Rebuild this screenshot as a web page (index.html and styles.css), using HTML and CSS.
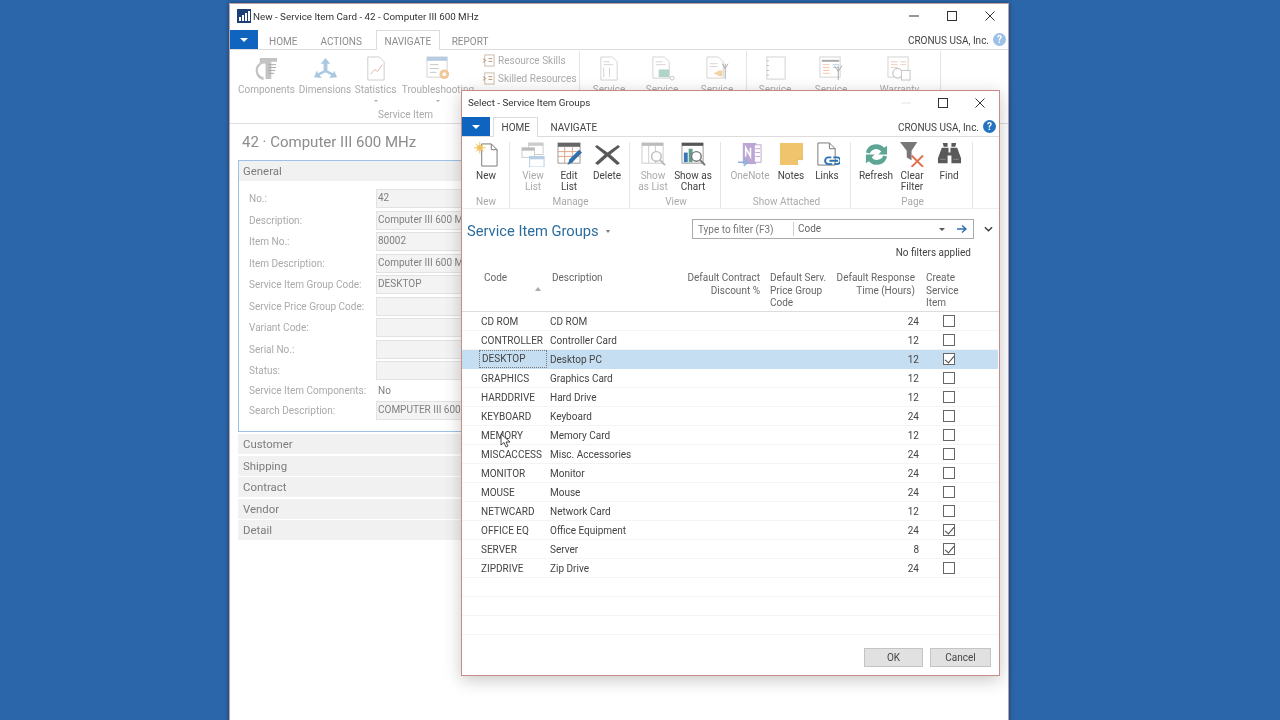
FILE: index.html
```html
<!DOCTYPE html>
<html lang="en">
<head>
<meta charset="utf-8">
<title>Select - Service Item Groups</title>
<link rel="stylesheet" href="styles.css">
</head>
<body>
<div class="desktop">

<section class="window card-window">
  <header class="titlebar">
    <svg class="app-icon" viewBox="0 0 14 14"><rect width="14" height="14" fill="#1d3f73"/><path d="M2 12V8h2v4zM5 12V6h2v6zM8 12V4h2v8zM11 12V2h2v10z" fill="#fff"/></svg>
    <span class="title-text">New - Service Item Card - 42 - Computer III 600 MHz</span>
    <div class="controls controls-outer">
      <svg viewBox="0 0 10 10"><path d="M0 5h10" stroke="#333" fill="none"/></svg>
      <svg viewBox="0 0 10 10"><rect x=".5" y=".5" width="9" height="9" stroke="#333" fill="none"/></svg>
      <svg viewBox="0 0 10 10"><path d="M.5.5l9 9M9.500.5l-9 9" stroke="#333" fill="none"/></svg>
    </div>
  </header>
  <nav class="tabbar tabbar-outer">
    <span class="file-btn"><i class="caret-white"></i></span>
    <span class="tab">HOME</span>
    <span class="tab">ACTIONS</span>
    <span class="tab tab-on">NAVIGATE</span>
    <span class="tab">REPORT</span>
    <span class="company">CRONUS USA, Inc.</span>
    <span class="help help-pale">?</span>
  </nav>
  <div class="ribbon ribbon-outer">
    <div class="rgroup rg-service-item">
      <div class="ritems">
        <div class="ritem w57"><svg class="ricon" viewBox="0 0 26 26"><path d="M6 2h18v4H18v18h-6V8a7 7 0 0 0-2 14v3A10 10 0 0 1 6 7z" fill="#b9b9b9"/><path d="M15 9h8M15 12h8M15 15h7M15 18h6" stroke="#999" fill="none"/></svg><span>Components</span></div>
        <div class="ritem w60"><svg class="ricon" viewBox="0 0 26 26"><path d="M13 2l5 6h-3v7l6 3 1-3 3 7-8 1 2-3-6-3-6 3 2 3-8-1 3-7 1 3 6-3V8H8z" fill="#9dbfdc"/></svg><span>Dimensions</span></div>
        <div class="ritem w41"><svg class="ricon" viewBox="0 0 26 26"><path d="M5 1h12l5 5v19H5z" fill="#fff" stroke="#c4c4c4"/><path d="M8 19l4-5 3 2 5-7" stroke="#e2a79a" fill="none"/></svg><span>Statistics</span><i class="more"></i></div>
        <div class="ritem w84"><svg class="ricon" viewBox="0 0 26 26"><rect x="1" y="1" width="21" height="21" fill="#fff" stroke="#ccc"/><rect x="1" y="1" width="21" height="4" fill="#a9c4e0"/><path d="M4 9h9M4 13h9M4 17h7" stroke="#bbb" fill="none"/><circle cx="19" cy="19" r="5" fill="#f0bd85"/><circle cx="19" cy="19" r="2" fill="#fff"/></svg><span>Troubleshooting</span><i class="more"></i></div>
        <div class="rsmall">
          <div class="rsmall-row"><svg viewBox="0 0 14 14"><rect x="3" y="1" width="10" height="12" fill="#fff" stroke="#c9b7a5"/><path d="M1 5l3 2-3 2M7 5h4M7 8h4" stroke="#b08f70" fill="none"/></svg><span>Resource Skills</span></div>
          <div class="rsmall-row"><svg viewBox="0 0 14 14"><rect x="3" y="1" width="10" height="12" fill="#fff" stroke="#c9b7a5"/><path d="M1 5l3 2-3 2M7 5h4M7 8h4" stroke="#b08f70" fill="none"/></svg><span>Skilled Resources</span></div>
        </div>
      </div>
      <div class="rlabel">Service Item</div>
    </div>
    <div class="rgroup rg-outer-b">
      <div class="ritems">
        <div class="ritem w56"><svg class="ricon" viewBox="0 0 26 26"><path d="M4 1h12l5 5v19H4z" fill="#fff" stroke="#ccc"/><path d="M7 6h6M7 9h10M7 12v10M13 12v10" stroke="#ccc" fill="none"/></svg><span>Service</span></div>
        <div class="ritem w50"><svg class="ricon" viewBox="0 0 26 26"><path d="M3 1h12l5 5v17H3z" fill="#fff" stroke="#ccc"/><path d="M6 6h7M6 9h10" stroke="#ccc" fill="none"/><rect x="9" y="14" width="11" height="8" fill="#a5cdbd"/><circle cx="23" cy="23" r="2" fill="none" stroke="#bbb"/></svg><span>Service</span></div>
        <div class="ritem w60"><svg class="ricon" viewBox="0 0 26 26"><path d="M2 1h12l5 5v17H2z" fill="#fff" stroke="#ccc"/><path d="M5 8h8M5 11h8" stroke="#ccc" fill="none"/><path d="M9 18l6-3h3v6h-3z" fill="#f0cb98"/><path d="M21 8v16M24 8l-3 5-3-5" stroke="#999" fill="none"/></svg><span>Service</span></div>
      </div>
    </div>
    <div class="rgroup rg-outer-c">
      <div class="ritems">
        <div class="ritem w56"><svg class="ricon" viewBox="0 0 26 26"><rect x="4" y="1" width="19" height="23" fill="#fff" stroke="#ccc"/><path d="M4 5h2M4 10h2M4 15h2M4 20h2" stroke="#aaa" fill="none"/></svg><span>Service</span></div>
        <div class="ritem w56"><svg class="ricon" viewBox="0 0 26 26"><rect x="1" y="1" width="21" height="21" fill="#fff" stroke="#ccc"/><path d="M3 5h18" stroke="#999" stroke-width="2" fill="none"/><path d="M4 9h7M4 12h7M4 15h7M4 18h7" stroke="#eebe9e" fill="none"/><path d="M14 9h7M14 12h7" stroke="#b8cbe0" fill="none"/><path d="M20 10v15M24 10l-4 6-4-6" stroke="#999" fill="none"/></svg><span>Service</span></div>
        <div class="ritem w81"><svg class="ricon" viewBox="0 0 26 26"><rect x="1" y="1" width="21" height="21" fill="#fff" stroke="#ccc"/><path d="M4 6h7M4 9h7M4 12h7M14 6h6M14 9h6" stroke="#e8c5b4" fill="none"/><circle cx="11" cy="18" r="5" fill="#fff" stroke="#aaa"/><rect x="15" y="15" width="9" height="10" fill="#fff" stroke="#bbb"/></svg><span>Warranty</span></div>
      </div>
    </div>
  </div>

  <div class="card-body">
    <h1 class="card-title">42 · Computer III 600 MHz</h1>
    <section class="fast-open">
      <div class="fast-head">General</div>
      <div class="fields">
        <div class="field"><label>No.:</label><div class="val">42</div></div>
        <div class="field"><label>Description:</label><div class="val">Computer III 600 MHz</div></div>
        <div class="field"><label>Item No.:</label><div class="val">80002</div></div>
        <div class="field"><label>Item Description:</label><div class="val">Computer III 600 MHz</div></div>
        <div class="field"><label>Service Item Group Code:</label><div class="val">DESKTOP</div></div>
        <div class="field"><label>Service Price Group Code:</label><div class="val"></div></div>
        <div class="field"><label>Variant Code:</label><div class="val"></div></div>
        <div class="field"><label>Serial No.:</label><div class="val"></div></div>
        <div class="field"><label>Status:</label><div class="val"></div></div>
        <div class="field field-plain"><label>Service Item Components:</label><div class="plain">No</div></div>
        <div class="field"><label>Search Description:</label><div class="val">COMPUTER III 600 MHZ</div></div>
      </div>
    </section>
    <div class="fast-closed">Customer</div>
    <div class="fast-closed">Shipping</div>
    <div class="fast-closed">Contract</div>
    <div class="fast-closed">Vendor</div>
    <div class="fast-closed">Detail</div>
  </div>
</section>

<section class="window dialog">
  <header class="dlg-title">
    <span class="dlg-title-text">Select - Service Item Groups</span>
    <div class="controls controls-dlg">
      <svg viewBox="0 0 10 10"><path d="M0 5h10" stroke="#e4e4e4" fill="none"/></svg>
      <svg viewBox="0 0 10 10"><rect x=".5" y=".5" width="9" height="9" stroke="#333" fill="none"/></svg>
      <svg viewBox="0 0 10 10"><path d="M.5.5l9 9M9.500.5l-9 9" stroke="#333" fill="none"/></svg>
    </div>
  </header>
  <nav class="tabbar tabbar-dlg">
    <span class="file-btn"><i class="caret-white"></i></span>
    <span class="tab tab-on">HOME</span>
    <span class="tab">NAVIGATE</span>
    <span class="company">CRONUS USA, Inc.</span>
    <span class="help">?</span>
  </nav>
  <div class="ribbon ribbon-dlg">
    <div class="rgroup rg-new">
      <div class="ritems">
        <div class="ritem w46"><svg class="ricon" viewBox="0 0 26 26"><path d="M8 2h10l6 6v17H8z" fill="#fff" stroke="#777"/><path d="M18 2v6h6" fill="none" stroke="#777"/><circle cx="6" cy="6" r="3" fill="#f4c35f"/><path d="M6 0v12M0 6h12M2 2l8 8M10 2l-8 8" stroke="#f4c35f"/></svg><span>New</span></div>
      </div>
      <div class="rlabel">New</div>
    </div>
    <div class="rgroup rg-manage">
      <div class="ritems">
        <div class="ritem w36 off"><svg class="ricon" viewBox="0 0 26 26"><rect x="8" y="1" width="15" height="12" fill="#fff" stroke="#ccc"/><rect x="8" y="1" width="15" height="3" fill="#ccc"/><rect x="1" y="6" width="13" height="10" fill="#fff" stroke="#ccc"/><rect x="1" y="6" width="13" height="3" fill="#bbb"/><rect x="9" y="15" width="15" height="11" fill="#fff" stroke="#b5cde5"/><rect x="9" y="15" width="15" height="3" fill="#b5cde5"/></svg><span>View<br>List</span></div>
        <div class="ritem w36"><svg class="ricon" viewBox="0 0 26 26"><rect x="1" y="1" width="23" height="21" fill="#fff" stroke="#999"/><rect x="1" y="1" width="23" height="4" fill="#666"/><path d="M1 10h23M1 15h23M8 5v17M16 5v17" stroke="#e0a083" fill="none"/><path d="M11 24l2-6 10-10 3 3-10 10z" fill="#2f6fae"/></svg><span>Edit<br>List</span></div>
        <div class="ritem w40"><svg class="ricon" viewBox="0 0 26 26"><path d="M2 3l11 8 11-8 2 2-10 8 10 9-3 2-10-9-10 9-3-2 10-9L0 5z" fill="#595959"/></svg><span>Delete</span></div>
      </div>
      <div class="rlabel">Manage</div>
    </div>
    <div class="rgroup rg-view">
      <div class="ritems">
        <div class="ritem w30 off"><svg class="ricon" viewBox="0 0 26 26"><rect x="1" y="1" width="22" height="21" fill="#fff" stroke="#ccc"/><rect x="1" y="1" width="22" height="3" fill="#bbb"/><path d="M8 4v18M15 4v18" stroke="#ccc" fill="none"/><circle cx="16" cy="15" r="5" fill="#fff" stroke="#bbb" stroke-width="1.5"/><path d="M20 19l5 5" stroke="#bbb" stroke-width="2"/></svg><span>Show<br>as List</span></div>
        <div class="ritem w50"><svg class="ricon" viewBox="0 0 26 26"><rect x="1" y="1" width="22" height="21" fill="#fff" stroke="#999"/><rect x="1" y="1" width="22" height="3" fill="#555"/><rect x="3" y="11" width="4" height="10" fill="#3c78b0"/><rect x="8" y="7" width="4" height="14" fill="#5d9e8e"/><circle cx="16" cy="15" r="5" fill="#fff" stroke="#777" stroke-width="1.5"/><path d="M20 19l5 5" stroke="#777" stroke-width="2"/></svg><span>Show as<br>Chart</span></div>
      </div>
      <div class="rlabel">View</div>
    </div>
    <div class="rgroup rg-attached">
      <div class="ritems">
        <div class="ritem w40 off"><svg class="ricon" viewBox="0 0 26 26"><rect x="5" y="1" width="14" height="22" fill="#bda6d3"/><rect x="17" y="3" width="7" height="18" fill="#fff" stroke="#bda6d3"/><path d="M18 7h5M18 11h5M18 15h5" stroke="#bda6d3"/><path d="M8 15V6l5 9V6" stroke="#fff" stroke-width="1.6" fill="none"/><path d="M0 21h9M6 17l4 4-4 4" stroke="#8db4d9" stroke-width="1.6" fill="none"/></svg><span>OneNote</span></div>
        <div class="ritem w42"><svg class="ricon" viewBox="0 0 26 26"><path d="M1 1h24v17l-6 6H1z" fill="#f0c36d"/><path d="M19 24v-6h6" fill="#fff" stroke="#e2b35f"/></svg><span>Notes</span></div>
        <div class="ritem w30"><svg class="ricon" viewBox="0 0 26 26"><path d="M3 1h12l6 6v17H3z" fill="#fff" stroke="#777"/><path d="M15 1v6h6" fill="none" stroke="#777"/><path d="M17 16h-3a3 3 0 0 0 0 7h4M19 16h4a3 3 0 0 1 0 7h-3M15 19.500h9" stroke="#2c71b3" stroke-width="2" fill="none"/></svg><span>Links</span></div>
      </div>
      <div class="rlabel">Show Attached</div>
    </div>
    <div class="rgroup rg-page">
      <div class="ritems">
        <div class="ritem w40"><svg class="ricon" viewBox="0 0 26 26"><path d="M2 11a11 11 0 0 1 19-5l3-2v9h-9l3-3a7 7 0 0 0-12 2z" fill="#5fa595"/><path d="M24 15a11 11 0 0 1-19 5l-3 2v-9h9l-3 3a7 7 0 0 0 12-2z" fill="#5fa595"/></svg><span>Refresh</span></div>
        <div class="ritem w32"><svg class="ricon" viewBox="0 0 26 26"><path d="M0 0h18l-6 9v10l-5-3V9z" fill="#777"/><path d="M12 14l12 12M24 14L12 26" stroke="#e0704f" stroke-width="2"/></svg><span>Clear<br>Filter</span></div>
        <div class="ritem w42"><svg class="ricon" viewBox="0 0 26 26"><path d="M6 1h5v4H7zM15 1h5l-1 4h-4zM5 6h7v5h2V6h7l4 11v5H15v-8h-4v8H1v-5z" fill="#595959"/><path d="M3 18h6M17 18h6" stroke="#8a8a8a" fill="none"/></svg><span>Find</span></div>
      </div>
      <div class="rlabel">Page</div>
    </div>
  </div>

  <div class="list-top">
    <div class="list-heading"><h2>Service Item Groups</h2><i class="caret-gray"></i></div>
    <div class="filter-col">
      <div class="filter-row">
        <div class="filter">
          <span class="filter-hint">Type to filter (F3)</span>
          <span class="filter-field">Code</span>
          <i class="caret-dark"></i>
          <svg class="filter-go" viewBox="0 0 10 10"><path d="M0 5h8M5 1.500L9 5 5 8.500" stroke="#2f6fae" stroke-width="1.500" fill="none"/></svg>
        </div>
        <svg class="chevron" viewBox="0 0 10 6"><path d="M1 1l4 4 4-4" stroke="#333" stroke-width="1.400" fill="none"/></svg>
      </div>
      <div class="no-filters">No filters applied</div>
    </div>
  </div>

  <div class="grid">
    <div class="ghead">
      <div class="gh gh-code">Code<i class="sort-up"></i></div>
      <div class="gh gh-desc">Description</div>
      <div class="gh gh-right gh-contract">Default Contract Discount %</div>
      <div class="gh gh-serv">Default Serv. Price Group Code</div>
      <div class="gh gh-right gh-resp">Default Response Time (Hours)</div>
      <div class="gh gh-create">Create Service Item</div>
    </div>
    <div class="grow"><span class="c-code">CD ROM</span><span class="c-desc">CD ROM</span><span class="c-num">24</span><span class="c-chk"><i class="chk"></i></span></div>
    <div class="grow"><span class="c-code">CONTROLLER</span><span class="c-desc">Controller Card</span><span class="c-num">12</span><span class="c-chk"><i class="chk"></i></span></div>
    <div class="grow grow-sel"><span class="c-code"><b class="focus">DESKTOP</b></span><span class="c-desc">Desktop PC</span><span class="c-num">12</span><span class="c-chk"><i class="chk chk-on"></i></span></div>
    <div class="grow"><span class="c-code">GRAPHICS</span><span class="c-desc">Graphics Card</span><span class="c-num">12</span><span class="c-chk"><i class="chk"></i></span></div>
    <div class="grow"><span class="c-code">HARDDRIVE</span><span class="c-desc">Hard Drive</span><span class="c-num">12</span><span class="c-chk"><i class="chk"></i></span></div>
    <div class="grow"><span class="c-code">KEYBOARD</span><span class="c-desc">Keyboard</span><span class="c-num">24</span><span class="c-chk"><i class="chk"></i></span></div>
    <div class="grow"><span class="c-code">MEMORY</span><span class="c-desc">Memory Card</span><span class="c-num">12</span><span class="c-chk"><i class="chk"></i></span></div>
    <div class="grow"><span class="c-code">MISCACCESS</span><span class="c-desc">Misc. Accessories</span><span class="c-num">24</span><span class="c-chk"><i class="chk"></i></span></div>
    <div class="grow"><span class="c-code">MONITOR</span><span class="c-desc">Monitor</span><span class="c-num">24</span><span class="c-chk"><i class="chk"></i></span></div>
    <div class="grow"><span class="c-code">MOUSE</span><span class="c-desc">Mouse</span><span class="c-num">24</span><span class="c-chk"><i class="chk"></i></span></div>
    <div class="grow"><span class="c-code">NETWCARD</span><span class="c-desc">Network Card</span><span class="c-num">12</span><span class="c-chk"><i class="chk"></i></span></div>
    <div class="grow"><span class="c-code">OFFICE EQ</span><span class="c-desc">Office Equipment</span><span class="c-num">24</span><span class="c-chk"><i class="chk chk-on"></i></span></div>
    <div class="grow"><span class="c-code">SERVER</span><span class="c-desc">Server</span><span class="c-num">8</span><span class="c-chk"><i class="chk chk-on"></i></span></div>
    <div class="grow"><span class="c-code">ZIPDRIVE</span><span class="c-desc">Zip Drive</span><span class="c-num">24</span><span class="c-chk"><i class="chk"></i></span></div>
    <div class="grow"></div>
    <div class="grow"></div>
    <div class="grow"></div>
  </div>

  <footer class="dlg-foot">
    <button class="btn btn-ok">OK</button>
    <button class="btn btn-cancel">Cancel</button>
  </footer>
</section>

<svg class="cursor" viewBox="0 0 11 16"><path d="M1 1v11l3-2.500L6 14l2-1-2-4h4z" fill="#fff" stroke="#222" stroke-width=".8"/></svg>
</div>
</body>
</html>
```
FILE: styles.css
```css
* { box-sizing: border-box; }
html, body { margin: 0; height: 100%; }
body { overflow: hidden; background: #2a66a9; font-family: Roboto, "Open Sans", "Liberation Sans", sans-serif; font-size: 10px; color: #444; }
.desktop { position: relative; width: 1280px; height: 720px; overflow: hidden; filter: blur(.3px); }
i { display: block; font-style: normal; }

.window { position: absolute; background: #fff; display: flex; flex-direction: column; }
.card-window { left: 229px; top: 3px; width: 780px; height: 730px; border: 1px solid #c2a3a3; border-bottom: 0; box-shadow: 0 0 4px rgba(20, 40, 80, .7); }
.dialog { left: 461px; top: 90px; width: 539px; height: 586px; border: 1px solid #c78c85; box-shadow: 0 4px 16px rgba(0, 0, 0, .22); }

.titlebar { height: 26px; flex: none; display: flex; align-items: center; padding: 0 0 2px 7px; }
.app-icon { width: 14px; height: 14px; }
.title-text { margin-left: 2px; font-size: 9.800px; color: #333; }
.controls { margin-left: auto; display: flex; align-items: center; }
.controls svg { width: 10px; height: 10px; }
.controls-outer { gap: 28px; margin-right: 13px; }
.controls-dlg { gap: 27px; margin-right: 14px; }

.tabbar { flex: none; display: flex; align-items: flex-end; border-bottom: 1px solid #dcdcdc; }
.tabbar-outer { height: 20px; gap: 1px; }
.tabbar-dlg { height: 20px; gap: 2px; }
.file-btn { width: 28px; height: 19px; background: #0f64c0; display: flex; align-items: center; justify-content: center; flex: none; margin-right: 1px; }
.tabbar-outer .file-btn { margin-right: -1px; }
.caret-white { width: 0; height: 0; border: 4px solid transparent; border-top: 4px solid #fff; border-bottom: 0; }
.tab { height: 20px; margin-bottom: -1px; padding: 0 9px; line-height: 21px; color: #8c8c8c; border: 1px solid transparent; border-bottom: 0; }
.tabbar-outer .tab { padding: 0 10px; }
.tabbar-outer .tab-on { padding: 0 7.500px; margin-left: 2px; }
.tab-on { background: #fff; border-color: #dcdcdc; }
.tabbar-dlg .tab { color: #444; line-height: 20px; }
.tabbar-dlg .tab-on { padding: 0 7.500px; }
.company { margin-left: auto; align-self: center; padding-top: 2px; color: #444; }
.help { width: 13px; height: 13px; margin: 0 3px 0 2px; align-self: center; border-radius: 50%; background: #2472c2; color: #fff; font-weight: 700; font-size: 10px; line-height: 13px; text-align: center; }
.help-pale { background: #9dc0e6; margin-left: 3px; margin-right: 2px; }

.ribbon { flex: none; display: flex; }
.ribbon-outer { height: 74px; border-bottom: 1px solid #ddd; padding-left: 8px; color: #aaa; }
.ribbon-outer .ricon { opacity: .85; }
.ribbon-dlg { height: 72px; border-bottom: 1px solid #eee; color: #444; padding-top: 5px; }
.rgroup { display: flex; flex-direction: column; border-right: 1px solid #e4e4e4; }
.ritems { display: flex; flex: 1; }
.ritem { display: flex; flex-direction: column; align-items: center; text-align: center; line-height: 11px; flex: none; white-space: nowrap; }
.ritem span { margin-top: 3px; }
.ricon { width: 25px; height: 25px; flex: none; }
.off { color: #aaa; }
.w30 { width: 30px; } .w32 { width: 32px; } .w36 { width: 36px; } .w40 { width: 40px; } .w41 { width: 41px; }
.w42 { width: 42px; } .w46 { width: 46px; } .w50 { width: 50px; } .w56 { width: 56px; }
.w57 { width: 57px; } .w60 { width: 60px; } .w81 { width: 81px; } .w84 { width: 84px; }
.more { width: 0; height: 0; margin-top: 5px; border: 2px solid transparent; border-top: 2px solid #aaa; border-bottom: 0; }
.rlabel { flex: none; text-align: center; color: #aaa; line-height: 12px; }
.ribbon-outer .ritem { padding-top: 5px; }
.ribbon-outer .rgroup { height: 70px; margin-top: 1px; }
.rg-service-item { width: 342px; }
.rg-outer-b { width: 167px; padding-left: 1px; }
.rg-outer-c { width: 194px; }
.rsmall { width: 98px; padding-top: 3px; padding-left: 2px; display: flex; flex-direction: column; gap: 5px; white-space: nowrap; }
.rsmall-row { display: flex; align-items: center; gap: 3px; height: 13px; }
.rsmall-row svg { width: 13px; height: 13px; }
.ribbon-outer .rlabel { padding: 0 6px 0 0; }
.ribbon-dlg .rlabel { padding-left: 2px; }
.ribbon-dlg .rg-new .rlabel { padding-left: 0; }
.rg-new { width: 48px; padding-left: 1px; }
.rg-manage { width: 120px; }
.rg-manage .ritems { padding-left: 5px; }
.rg-view { width: 91px; }
.rg-view .ritems { padding-left: 8px; }
.rg-attached { width: 130px; }
.rg-attached .ritems { padding-left: 9px; }
.rg-page { width: 122px; }
.rg-page .ritems { padding-left: 5px; }

.card-body { flex: 1; padding: 7px 10px 0 8px; color: #aaa; }
.card-title { margin: 0 0 7px 4px; font-weight: 400; font-size: 15px; line-height: 22px; color: #8c8c8c; }
.fast-open { border: 1px solid #9cc2e6; padding-bottom: 11px; }
.fast-head { height: 20px; padding-left: 4px; background: #f1f1f1; font-size: 11.400px; line-height: 21px; color: #7c7c7c; }
.fields { padding: 8px 0 0 10px; display: flex; flex-direction: column; gap: 2.500px; }
.field { display: flex; align-items: center; height: 19px; }
.field label { width: 127px; flex: none; }
.val { flex: 1; height: 19px; padding-left: 1px; background: #f3f3f3; border: 1px solid #e2e2e2; color: #808080; line-height: 16px; white-space: nowrap; overflow: hidden; }
.field-plain { height: 16px; }
.plain { padding-left: 2px; color: #808080; }
.fast-closed { height: 20px; margin-top: 1.500px; padding-left: 5px; background: #f1f1f1; font-size: 11.400px; line-height: 20px; color: #7c7c7c; }
.fast-open + .fast-closed { margin-top: 2px; }

.dlg-title { height: 26px; flex: none; display: flex; align-items: center; padding: 0 0 3px 6px; }
.dlg-title-text { font-size: 9.800px; color: #333; }

.list-top { flex: none; display: flex; height: 63px; }
.list-heading { display: flex; align-items: center; height: 34px; padding: 10px 0 0 5px; }
.list-heading h2 { margin: 0; font-weight: 400; font-size: 14.700px; color: #2c6d9e; }
.caret-gray { width: 0; height: 0; margin-left: 7px; border: 2.500px solid transparent; border-top: 3px solid #777; border-bottom: 0; }
.filter-col { margin-left: auto; width: 307px; padding-top: 10px; }
.filter-row { display: flex; align-items: center; }
.filter { width: 282px; height: 20px; flex: none; display: flex; align-items: center; border: 1px solid #aaa; }
.filter-hint { width: 100px; padding-left: 5px; color: #777; }
.filter-field { flex: 1; padding-left: 4px; border-left: 1px solid #ccc; line-height: 14px; color: #666; }
.caret-dark { width: 0; height: 0; border: 3px solid transparent; border-top: 3px solid #555; border-bottom: 0; }
.filter-go { width: 10px; height: 10px; margin: 0 6px 0 12px; }
.chevron { width: 9px; height: 6px; margin-left: 10px; }
.no-filters { width: 279px; margin-top: 7px; text-align: right; line-height: 13px; }

.grid { flex: none; }
.ghead { display: flex; height: 40px; border-bottom: 1px solid #ddd; line-height: 12.500px; color: #666; }
.gh { flex: none; }
.gh-code { position: relative; width: 89px; padding-left: 22px; }
.sort-up { position: absolute; left: 73px; top: 15px; width: 0; height: 0; border: 3px solid transparent; border-bottom: 4px solid #aaa; border-top: 0; }
.gh-desc { width: 133px; padding-left: 1px; }
.gh-contract { width: 76px; }
.gh-serv { width: 72px; padding-left: 10px; }
.gh-resp { width: 83px; }
.gh-create { width: 65px; padding-left: 11px; }
.gh-right { text-align: right; }
.grow { display: flex; align-items: center; height: 19px; border-bottom: 1px solid #f4f4f4; margin-right: 1px; color: #444; }
.grow-sel { background: #c5def2; border-bottom-color: #c5def2; }
.c-code { width: 88px; flex: none; padding-left: 19px; }
.c-desc { width: 280px; flex: none; }
.c-num { width: 89px; flex: none; text-align: right; }
.c-chk { flex: 1; padding-left: 24px; }
.focus { display: block; width: 68px; height: 18px; margin-left: -2px; padding-left: 2px; font-weight: 400; line-height: 16px; border: 1px dotted #777; }
.chk { position: relative; width: 12px; height: 12px; border: 1px solid #666; background: #fff; }
.chk-on::after { content: ""; position: absolute; left: 3px; top: 0; width: 4px; height: 8px; border: solid #444; border-width: 0 1.200px 1.200px 0; transform: rotate(40deg); }

.dlg-foot { flex: 1; display: flex; justify-content: flex-end; align-items: flex-end; padding: 0 8px 8px 0; gap: 7px; }
.btn { height: 19px; padding: 0; border: 1px solid #c4c4c4; background: #e1e1e1; font: inherit; color: #444; }
.btn-ok { width: 59px; }
.btn-cancel { width: 61px; }

.cursor { position: absolute; left: 500px; top: 433px; width: 11px; height: 16px; }
```
